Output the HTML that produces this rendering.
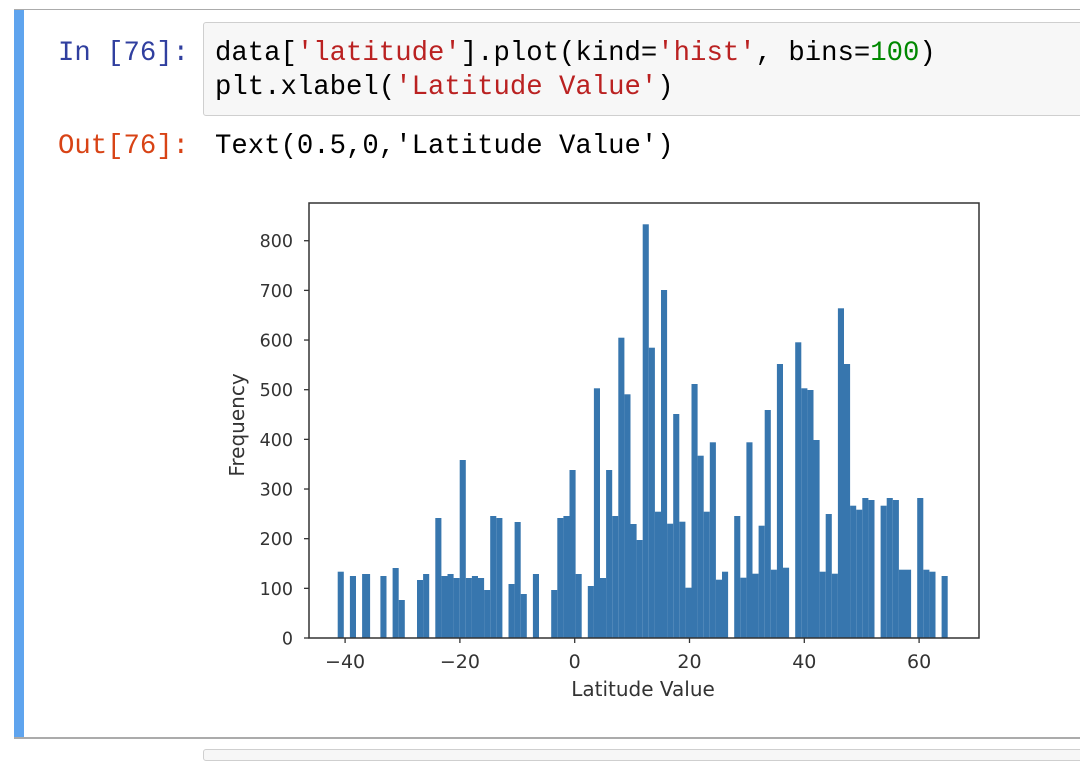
<!DOCTYPE html>
<html><head><meta charset="utf-8"><style>
body{margin:0;width:1080px;height:752px;background:#fff;overflow:hidden;position:relative;font-family:"Liberation Mono",monospace;}
.cell{position:absolute;left:14px;top:9px;width:1080px;height:727px;border-top:1.5px solid #ababab;border-bottom:2px solid #ababab;}
.bar{position:absolute;left:14px;top:10px;width:10px;height:727px;background:#5fa4ee;}
.inbox{position:absolute;left:203px;top:22px;width:890px;height:92px;background:#f7f7f7;border:1px solid #cfcfcf;border-radius:3px;}
.code{position:absolute;font-size:27.3px;line-height:34px;white-space:pre;color:#000;}
.s{color:#ba2121}.n{color:#080}
.next{position:absolute;left:203px;top:749px;width:890px;height:10px;border:1px solid #cfcfcf;background:#f7f7f7;border-radius:3px;}
</style></head><body>
<div class="cell"></div><div class="bar"></div>
<div class="inbox"></div>
<div class="code" style="left:58px;top:37px;color:#303f9f">In [76]:</div>
<div class="code" style="left:215px;top:37px">data[<span class="s">'latitude'</span>].plot(kind=<span class="s">'hist'</span>, bins=<span class="n">100</span>)
plt.xlabel(<span class="s">'Latitude Value'</span>)</div>
<div class="code" style="left:58px;top:130px;color:#d84315">Out[76]:</div>
<div class="code" style="left:215px;top:130px">Text(0.5,0,'Latitude Value')</div>
<div class="next"></div>
<svg id="p" width="1080" height="752" style="position:absolute;left:0;top:0" xmlns="http://www.w3.org/2000/svg"></svg>
<script>
var h=[1115,0,1128,0,1122,0,0,1128,0,1104,1200,0,0,1140,1122,0,954,1128,1122,1134,780,1134,1128,1134,1170,948,954,0,1152,966,1182,0,1122,0,0,1170,954,948,810,1122,0,1158,565,1134,810,948,413,583,972,1020,73,443,935,270,971,642,965,1163,552,767,935,727,1139,1115,0,948,1133,727,1121,977,630,1109,492,1103,0,427,565,570,720,1115,942,1121,325,492,917,929,894,900,0,917,894,900,1109,1109,0,894,1109,1115,0,1128];
var s='';
for(var i=0;i<100;i++){if(!h[i])continue;var x=337.7+i*6.1,y=200+h[i]/3,w=(i==4?8:6.1);s+='<rect x="'+x.toFixed(1)+'" y="'+y.toFixed(1)+'" width="'+w+'" height="'+(638-y).toFixed(1)+'" fill="#3776ae"/>';}
s+='<rect x="309" y="203" width="670" height="435" fill="none" stroke="#333" stroke-width="1.5"/>';
for(var k=0;k<=8;k++){var y=638-k*49.66;s+='<line x1="304" y1="'+y+'" x2="309" y2="'+y+'" stroke="#333" stroke-width="1.3"/><text x="293" y="'+(y+6.5)+'" text-anchor="end" font-family="DejaVu Sans,sans-serif" font-size="17.5" fill="#333">'+(k*100)+'</text>';}
var xl=[-40,-20,0,20,40,60];
for(var j=0;j<6;j++){var x=574.7+xl[j]*5.74;s+='<line x1="'+x+'" y1="638" x2="'+x+'" y2="643" stroke="#333" stroke-width="1.3"/><text x="'+x+'" y="668" text-anchor="middle" font-family="DejaVu Sans,sans-serif" font-size="19" fill="#333">'+(xl[j]<0?'\u2212'+(-xl[j]):xl[j])+'</text>';}
s+='<text x="643" y="696" text-anchor="middle" font-family="DejaVu Sans,sans-serif" font-size="20" fill="#333">Latitude Value</text>';
s+='<text transform="translate(244,425) rotate(-90)" text-anchor="middle" font-family="DejaVu Sans,sans-serif" font-size="20" fill="#333">Frequency</text>';
document.getElementById('p').innerHTML=s;
</script>
</body></html>
